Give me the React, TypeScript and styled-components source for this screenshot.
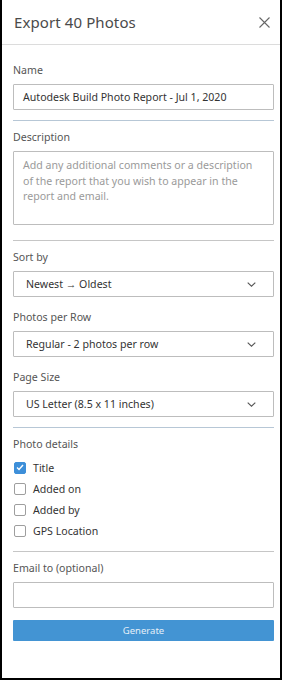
import React from "react";
import styled, { createGlobalStyle } from "styled-components";

const Global = createGlobalStyle`
  html, body { margin: 0; padding: 0; background: #000; }
  body { font-family: "Noto Sans", "Open Sans", sans-serif; }
  * { box-sizing: border-box; }
`;

const Panel = styled.div`
  width: 282px;
  height: 680px;
  background: #fff;
  border-left: 2px solid #000;
  border-right: 2px solid #000;
  border-bottom: 2px solid #000;
  display: flex;
  flex-direction: column;
`;

const Header = styled.div`
  height: 45px;
  flex: none;
  display: flex;
  align-items: center;
  justify-content: space-between;
  padding: 0 10px 0 12px;
  border-bottom: 1px solid #dcdcdc;
`;

const Title = styled.h1`
  margin: 0;
  font-size: 15px;
  font-weight: 400;
  color: #4a4a4a;
  letter-spacing: 0.1px;
`;

const CloseButton = styled.button`
  border: none;
  background: none;
  padding: 0;
  width: 12px;
  height: 12px;
  display: flex;
  align-items: center;
  justify-content: center;
  cursor: pointer;
`;

const Body = styled.div`
  padding: 18px 6px 0 11px;
  display: flex;
  flex-direction: column;
`;

const Label = styled.div<{ $top?: number }>`
  font-size: 10.6px;
  line-height: 14px;
  color: #555;
  margin-top: ${(p) => p.$top ?? 0}px;
  margin-bottom: 7px;
`;

const TextInput = styled.div`
  height: 26px;
  border: 1px solid #bdbdbd;
  border-radius: 1px;
  display: flex;
  align-items: center;
  padding: 0 9px;
  font-size: 10.6px;
  color: #333;
`;

const TextArea = styled.div`
  height: 74px;
  border: 1px solid #bdbdbd;
  border-radius: 1px;
  padding: 6px 9px;
  font-size: 10.6px;
  line-height: 15.5px;
  color: #9a9a9a;
`;

const Select = styled.div`
  height: 26px;
  border: 1px solid #bdbdbd;
  border-radius: 1px;
  display: flex;
  align-items: center;
  justify-content: space-between;
  padding: 0 17px 0 12px;
  font-size: 10.6px;
  color: #333;
`;

const Divider = styled.hr<{ $top: number; $blue?: boolean }>`
  border: none;
  height: 1px;
  margin: ${(p) => p.$top}px 0 9px;
  background: ${(p) => (p.$blue ? "#b7c7d6" : "#c6c6c6")};
`;

const CheckList = styled.div`
  display: flex;
  flex-direction: column;
  margin-top: -1px;
`;

const CheckRow = styled.label`
  height: 21px;
  display: flex;
  align-items: center;
  gap: 7px;
  font-size: 10.6px;
  color: #333;
  padding-left: 1px;
`;

const Box = styled.span<{ $checked?: boolean }>`
  width: 12px;
  height: 12px;
  border-radius: 2px;
  border: 1px solid ${(p) => (p.$checked ? "#3d8fd9" : "#9e9e9e")};
  background: ${(p) => (p.$checked ? "#3d8fd9" : "#fff")};
  display: flex;
  align-items: center;
  justify-content: center;
`;

const GenerateButton = styled.button`
  margin-top: 12px;
  height: 21px;
  border: none;
  border-radius: 1px;
  background: #4394d3;
  color: #e6f0f8;
  font-family: inherit;
  font-size: 9.5px;
  padding: 0;
`;

const Chevron = () => (
  <svg width="9" height="5" viewBox="0 0 9 5" fill="none">
    <path d="M0.7 0.7 L4.5 4.2 L8.3 0.7" stroke="#555" strokeWidth="1.1" />
  </svg>
);

const items = [
  { label: "Title", checked: true },
  { label: "Added on", checked: false },
  { label: "Added by", checked: false },
  { label: "GPS Location", checked: false },
];

export default function App() {
  return (
    <>
      <Global />
      <Panel>
        <Header>
          <Title>Export 40 Photos</Title>
          <CloseButton aria-label="Close">
            <svg width="11" height="11" viewBox="0 0 11 11">
              <path d="M0.5 0.5 L10.5 10.5 M10.5 0.5 L0.5 10.5" stroke="#666" strokeWidth="1.1" />
            </svg>
          </CloseButton>
        </Header>
        <Body>
          <Label>Name</Label>
          <TextInput>Autodesk Build Photo Report - Jul 1, 2020</TextInput>
          <Divider $top={10} $blue />
          <Label>Description</Label>
          <TextArea>
            Add any additional comments or a description of the report that you wish to appear in the report and email.
          </TextArea>
          <Divider $top={15} />
          <Label>Sort by</Label>
          <Select>
            <span>Newest → Oldest</span>
            <Chevron />
          </Select>
          <Label $top={13}>Photos per Row</Label>
          <Select>
            <span>Regular - 2 photos per row</span>
            <Chevron />
          </Select>
          <Label $top={13}>Page Size</Label>
          <Select>
            <span>US Letter (8.5 x 11 inches)</span>
            <Chevron />
          </Select>
          <Divider $top={10} $blue />
          <Label>Photo details</Label>
          <CheckList>
            {items.map((it) => (
              <CheckRow key={it.label}>
                <Box $checked={it.checked}>
                  {it.checked && (
                    <svg width="8" height="7" viewBox="0 0 8 7">
                      <path d="M1 3.6 L3 5.5 L7 1" stroke="#fff" strokeWidth="1.4" fill="none" />
                    </svg>
                  )}
                </Box>
                {it.label}
              </CheckRow>
            ))}
          </CheckList>
          <Divider $top={10} />
          <Label>Email to (optional)</Label>
          <TextInput />
          <GenerateButton>Generate</GenerateButton>
        </Body>
      </Panel>
    </>
  );
}
